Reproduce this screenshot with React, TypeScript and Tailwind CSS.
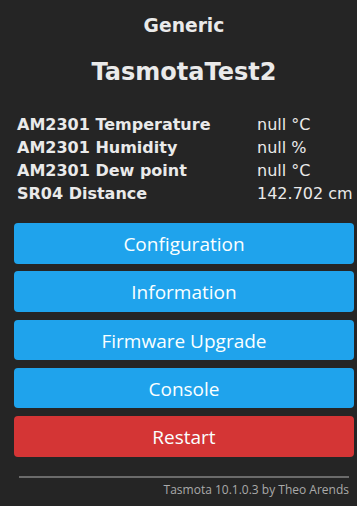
const sensors = [
  ["AM2301 Temperature", "null °C"],
  ["AM2301 Humidity", "null %"],
  ["AM2301 Dew point", "null °C"],
  ["SR04 Distance", "142.702 cm"],
];

const buttons = [
  { label: "Configuration", red: false },
  { label: "Information", red: false },
  { label: "Firmware Upgrade", red: false },
  { label: "Console", red: false },
  { label: "Restart", red: true },
];

export default function App() {
  return (
    <div className="min-h-[506px] bg-[#252525] text-[#eaeaea] font-['DejaVu_Sans',sans-serif]">
      <div className="ml-[14px] w-[340px] pt-[15px]">
        <div className="text-center text-[18.72px] leading-[22px] font-bold">Generic</div>
        <div className="mt-[21px] text-center text-[24px] leading-[28px] font-bold">TasmotaTest2</div>

        <div className="mt-[27px] flex flex-col pl-[3px]">
          {sensors.map(([name, value]) => (
            <div key={name} className="flex text-[16px] leading-[23px]">
              <span className="w-[240px] font-bold">{name}</span>
              <span>{value}</span>
            </div>
          ))}
        </div>

        <div className="mt-[18px] flex flex-col gap-[7.8px]">
          {buttons.map((b) => (
            <button
              key={b.label}
              className={
                "h-[40.5px] w-full rounded-[4px] pt-[2px] text-[19px] text-[#faffff] font-['Open_Sans',sans-serif] " +
                (b.red ? "bg-[#d43535]" : "bg-[#1fa3ec]")
              }
            >
              {b.label}
            </button>
          ))}
        </div>

        <div className="mt-[19px] ml-[5px] mr-[5px] h-[2px] bg-[#6b6b6b]" />
        <div className="mt-[4px] pr-[5px] text-right text-[12px] leading-[15px] text-[#aaaaaa] font-['Open_Sans',sans-serif]">
          Tasmota 10.1.0.3 by Theo Arends
        </div>
      </div>
    </div>
  );
}
